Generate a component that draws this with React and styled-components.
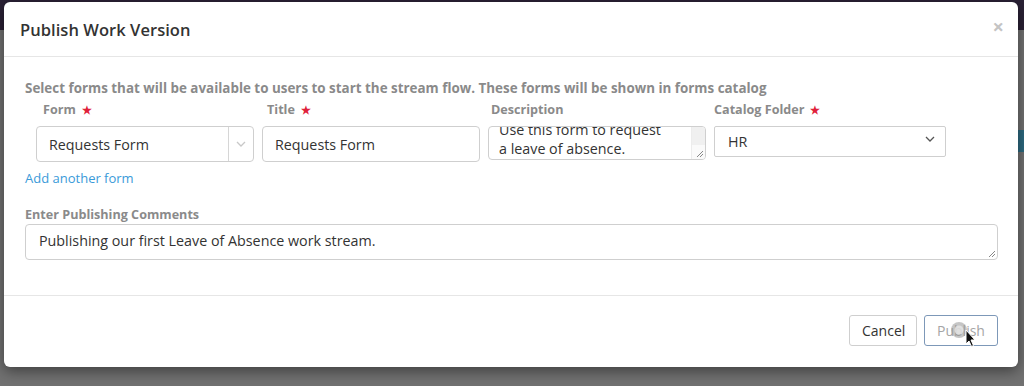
import React from "react";
import styled, { createGlobalStyle } from "styled-components";

const GlobalStyle = createGlobalStyle`
  html, body {
    margin: 0;
    padding: 0;
    width: 1024px;
    height: 386px;
    overflow: hidden;
    font-family: "Open Sans", "Noto Sans", Arial, sans-serif;
  }
  * { box-sizing: border-box; }
`;

const Page = styled.div`
  position: relative;
  width: 1024px;
  height: 386px;
  background: #717171;
  overflow: hidden;
`;

const TopNav = styled.div`
  height: 30px;
  background: #2a2135;
  display: flex;
  align-items: center;
  justify-content: flex-end;
  gap: 48px;
  padding-right: 40px;
  color: #4a4256;
  font-size: 14px;
`;

const PageStrip = styled.div`
  margin-top: 100px;
  margin-left: auto;
  width: 40px;
  height: 22px;
  background: #2d6a80;
`;

const Modal = styled.div`
  position: absolute;
  left: 4px;
  top: 2px;
  width: 1014px;
  height: 365px;
  background: #fff;
  border-radius: 6px;
  box-shadow: 0 4px 14px rgba(0, 0, 0, 0.45);
  display: flex;
  flex-direction: column;
`;

const Header = styled.div`
  height: 55px;
  border-bottom: 1px solid #e6e6e6;
  display: flex;
  align-items: center;
  justify-content: space-between;
  padding: 0 16px 0 16px;
  flex-shrink: 0;
`;

const Title = styled.h4`
  margin: 0;
  font-size: 16.5px;
  font-weight: 600;
  color: #333;
  letter-spacing: 0.05px;
`;

const Close = styled.span`
  font-size: 20px;
  font-weight: 700;
  color: #c4c4c4;
  line-height: 1;
  transform: translateY(-2px);
  margin-right: -2px;
`;

const Body = styled.div`
  height: 239px;
  border-bottom: 1px solid #e6e6e6;
  padding: 23px 20px 0 21px;
  flex-shrink: 0;
`;

const Instruction = styled.div`
  font-size: 13.4px;
  font-weight: 700;
  color: #8a8a8a;
  line-height: 17px;
  white-space: nowrap;
`;

const FormRow = styled.div`
  display: grid;
  grid-template-columns: 218px 218px 218px 232px;
  column-gap: 8px;
  padding-left: 11px;
  margin-top: 4px;
`;

const Field = styled.div`
  display: flex;
  flex-direction: column;
`;

const Label = styled.label`
  font-size: 12.6px;
  font-weight: 700;
  color: #8a8a8a;
  line-height: 17px;
  padding-left: ${(p) => p.$indent || 0}px;
  margin-bottom: 8px;
`;

const Star = styled.span`
  color: #e0203a;
  margin-left: 6px;
  font-size: 11px;
`;

const Box = styled.div`
  height: ${(p) => p.$h || 36}px;
  border: 1px solid #cfcfcf;
  border-radius: ${(p) => (p.$square ? 2 : 4)}px;
  display: flex;
  align-items: center;
  font-size: 14.3px;
  color: #333;
  position: relative;
  overflow: hidden;
`;

const BoxText = styled.span`
  flex: 1;
  padding-left: ${(p) => p.$pad || 12}px;
  white-space: nowrap;
`;

const SelectButton = styled.div`
  width: 25px;
  height: 100%;
  border-left: 1px solid #d6d6d6;
  display: flex;
  align-items: center;
  justify-content: center;
`;

const ChevronWrap = styled.div`
  width: 30px;
  display: flex;
  align-items: center;
  justify-content: center;
  transform: translateY(-3px);
`;

const TextArea = styled.div`
  height: ${(p) => p.$h}px;
  border: 1px solid #cfcfcf;
  border-radius: 4px;
  position: relative;
  overflow: hidden;
  font-size: 14.3px;
  color: #333;
  line-height: 19px;
`;

const ScrolledText = styled.div`
  padding: 0 20px 0 10px;
  margin-top: -7px;
`;

const ScrollTrack = styled.div`
  position: absolute;
  right: 0;
  top: 0;
  width: 14px;
  height: 100%;
  background: linear-gradient(#f0f0f0 0 55%, #fafafa 55% 100%);
  border-left: 1px solid #ececec;
`;

const Grip = styled.svg`
  position: absolute;
  right: 1px;
  bottom: 1px;
`;

const CommentText = styled.div`
  padding: 6px 13px;
`;

const AddLink = styled.a`
  display: inline-block;
  margin-top: 7px;
  font-size: 13px;
  color: #3a9ad9;
  line-height: 18px;
  text-decoration: none;
`;

const SectionLabel = styled.div`
  margin-top: 18px;
  margin-bottom: 1px;
  font-size: 12.6px;
  font-weight: 700;
  color: #8a8a8a;
  line-height: 17px;
`;

const Footer = styled.div`
  flex: 1;
  display: flex;
  align-items: center;
  justify-content: flex-end;
  gap: 7px;
  padding: 0 20px 2px 0;
`;

const Button = styled.button`
  height: 31px;
  padding: 0 12px;
  background: #fff;
  border: 1px solid ${(p) => (p.$focus ? "#7d98b8" : "#cfcfcf")};
  border-radius: 3px;
  font-family: inherit;
  font-size: 14px;
  color: ${(p) => (p.$muted ? "#a5a5a5" : "#333")};
  position: relative;
  width: ${(p) => p.$w}px;
`;

const Overlay = styled.svg`
  position: absolute;
  left: 24px;
  top: 2px;
  pointer-events: none;
`;

const GripIcon = () => (
  <Grip width="9" height="9" viewBox="0 0 9 9">
    <path d="M8 2 L2 8 M8 5 L5 8" stroke="#888" strokeWidth="1" />
  </Grip>
);

const Chevron = ({ color }) => (
  <svg width="10" height="6" viewBox="0 0 10 6">
    <path d="M1 1 L5 5 L9 1" fill="none" stroke={color} strokeWidth="1.3" />
  </svg>
);

export default function App() {
  return (
    <>
      <GlobalStyle />
      <Page>
        <TopNav>
          <span>Home</span>
          <span>Our Actions</span>
          <span>Start Flows</span>
          <span>Dashboards</span>
          <span>Our Streams</span>
        </TopNav>
        <PageStrip />
        <Modal>
          <Header>
            <Title>Publish Work Version</Title>
            <Close>×</Close>
          </Header>
          <Body>
            <Instruction>
              Select forms that will be available to users to start the stream
              flow. These forms will be shown in forms catalog
            </Instruction>
            <FormRow>
              <Field>
                <Label $indent={7}>
                  Form<Star>★</Star>
                </Label>
                <Box $h={36}>
                  <BoxText>Requests Form</BoxText>
                  <SelectButton>
                    <Chevron color="#c8c8c8" />
                  </SelectButton>
                </Box>
              </Field>
              <Field>
                <Label $indent={5}>
                  Title<Star>★</Star>
                </Label>
                <Box $h={36}>
                  <BoxText>Requests Form</BoxText>
                </Box>
              </Field>
              <Field>
                <Label $indent={3}>Description</Label>
                <TextArea $h={34}>
                  <ScrolledText>
                    Use this form to request
                    <br />a leave of absence.
                  </ScrolledText>
                  <ScrollTrack />
                  <GripIcon />
                </TextArea>
              </Field>
              <Field>
                <Label>
                  Catalog Folder<Star>★</Star>
                </Label>
                <Box $h={31} $square>
                  <BoxText $pad={13}>HR</BoxText>
                  <ChevronWrap>
                    <Chevron color="#555" />
                  </ChevronWrap>
                </Box>
              </Field>
            </FormRow>
            <AddLink href="#">Add another form</AddLink>
            <SectionLabel>Enter Publishing Comments</SectionLabel>
            <TextArea $h={36}>
              <CommentText>
                Publishing our first Leave of Absence work stream.
              </CommentText>
              <GripIcon />
            </TextArea>
          </Body>
          <Footer>
            <Button $w={68}>Cancel</Button>
            <Button $w={74} $focus $muted>
              Publish
              <Overlay width="28" height="30" viewBox="0 0 28 30">
                <circle cx="10" cy="12" r="8" fill="rgba(150,150,150,0.55)" />
                <circle cx="10" cy="12" r="4.5" fill="rgba(230,230,230,0.8)" />
                <path
                  d="M17 12 L17 26 L20 23 L22.5 28.5 L24.5 27.5 L22 22 L26 22 Z"
                  fill="#111"
                  stroke="#fff"
                  strokeWidth="1"
                />
              </Overlay>
            </Button>
          </Footer>
        </Modal>
      </Page>
    </>
  );
}
